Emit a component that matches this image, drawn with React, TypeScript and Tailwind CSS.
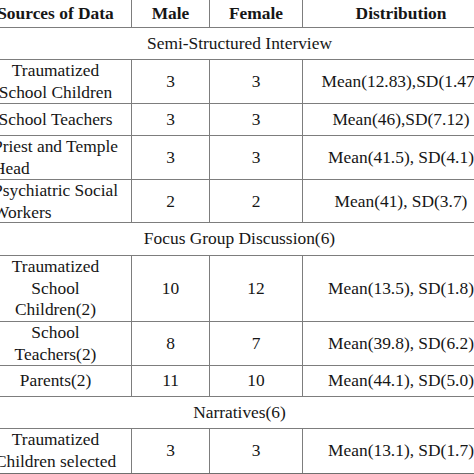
type Row =
  | { kind: 'section'; label: string; h: string }
  | { kind: 'data'; source: string; male: string; female: string; dist: string; h: string; left?: boolean }

const rows: Row[] = [
  { kind: 'section', label: 'Semi-Structured Interview', h: 'h-[32px]' },
  { kind: 'data', source: 'Traumatized School Children', male: '3', female: '3', dist: 'Mean(12.83),SD(1.47)', h: 'h-[44px]' },
  { kind: 'data', source: 'School Teachers', male: '3', female: '3', dist: 'Mean(46),SD(7.12)', h: 'h-[32px]' },
  { kind: 'data', source: 'Priest and Temple Head', male: '3', female: '3', dist: 'Mean(41.5), SD(4.1)', h: 'h-[44px]', left: true },
  { kind: 'data', source: 'Psychiatric Social Workers', male: '2', female: '2', dist: 'Mean(41), SD(3.7)', h: 'h-[43px]', left: true },
  { kind: 'section', label: 'Focus Group Discussion(6)', h: 'h-[33px]' },
  { kind: 'data', source: 'Traumatized School Children(2)', male: '10', female: '12', dist: 'Mean(13.5), SD(1.8)', h: 'h-[66px]' },
  { kind: 'data', source: 'School Teachers(2)', male: '8', female: '7', dist: 'Mean(39.8), SD(6.2)', h: 'h-[44px]' },
  { kind: 'data', source: 'Parents(2)', male: '11', female: '10', dist: 'Mean(44.1), SD(5.0)', h: 'h-[31px]' },
  { kind: 'section', label: 'Narratives(6)', h: 'h-[32px]' },
  { kind: 'data', source: 'Traumatized Children selected', male: '3', female: '3', dist: 'Mean(13.1), SD(1.7)', h: 'h-[46px] border-b-2 border-b-[#6f6f6f]' },
]

const cols = 'grid grid-cols-[152px_78px_93px_196px]'
const cell = 'flex items-center justify-center text-center border-r border-[#7d7d7d]'

export default function App() {
  return (
    <div className="w-[474px] h-[474px] overflow-hidden bg-white text-[#161616] font-['Liberation_Serif',serif] text-[17.4px] leading-[21.7px]">
      <div className="-ml-[20px] w-[519px]">
        <div className={`${cols} h-[28px] border-b border-[#7d7d7d] font-bold`}>
          <div className={cell}>Sources of Data</div>
          <div className={cell}>Male</div>
          <div className={cell}>Female</div>
          <div className="flex items-center justify-center">Distribution</div>
        </div>

        {rows.map((r, i) =>
          r.kind === 'section' ? (
            <div key={i} className={`${r.h} flex items-center justify-center border-b border-[#7d7d7d]`}>
              {r.label}
            </div>
          ) : (
            <div key={i} className={`${cols} ${r.h} border-b border-[#7d7d7d]`}>
              {r.left ? (
                <div className="flex items-center border-r border-[#7d7d7d] pl-[13px] pr-[8px] text-left">{r.source}</div>
              ) : (
                <div className={`${cell} px-[11px]`}>{r.source}</div>
              )}
              <div className={cell}>{r.male}</div>
              <div className={cell}>{r.female}</div>
              <div className="flex items-center justify-center whitespace-nowrap">{r.dist}</div>
            </div>
          )
        )}
      </div>
    </div>
  )
}
